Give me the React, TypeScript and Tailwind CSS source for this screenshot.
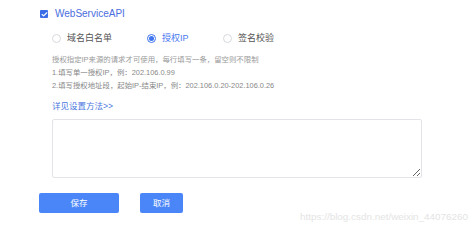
import { Check } from 'lucide-react'

const font = { fontFamily: '"Liberation Sans", "Noto Sans CJK SC", sans-serif' }

function Radio({ label, checked }: { label: string; checked?: boolean }) {
  return (
    <label className="flex items-center gap-[6px]">
      {checked ? (
        <span className="flex h-[9px] w-[9px] items-center justify-center rounded-full border-[1px] border-[#3f74f0]">
          <span className="h-[5px] w-[5px] rounded-full bg-[#3f74f0]" />
        </span>
      ) : (
        <span className="h-[9px] w-[9px] rounded-full border border-[#d6d9de] bg-white" />
      )}
      <span className={checked ? 'text-[#4a7af0]' : 'text-[#555]'}>{label}</span>
    </label>
  )
}

export default function App() {
  return (
    <div className="relative h-[228px] w-[474px] overflow-hidden bg-white" style={font}>
      {/* WebServiceAPI checkbox */}
      <div className="flex items-center gap-[7px] pl-[40px] pt-[10px] text-[10px] leading-[8px]">
        <span className="flex h-[8px] w-[8px] items-center justify-center rounded-[1px] bg-[#3c6ee8]">
          <Check className="h-[7px] w-[7px] text-white" strokeWidth={4} />
        </span>
        <span className="text-[#4a6ee0]">WebServiceAPI</span>
      </div>

      <div className="pl-[52px]">
        {/* mode radios */}
        <div className="mt-[15px] flex items-center text-[9px] leading-[10px]">
          <div className="w-[95px]">
            <Radio label="域名白名单" />
          </div>
          <div className="w-[76px]">
            <Radio label="授权IP" checked />
          </div>
          <Radio label="签名校验" />
        </div>

        {/* help text */}
        <div className="mt-[13px] flex flex-col gap-[5px] text-[7.4px] leading-[8px] text-[#9a9a9a]">
          <p>授权指定IP来源的请求才可使用，每行填写一条，留空则不限制</p>
          <p className="text-[#888]">1.填写单一授权IP，例：202.106.0.99</p>
          <p className="text-[#888]">2.填写授权地址段，起始IP-结束IP，例：202.106.0.20-202.106.0.26</p>
        </div>

        <p className="mt-[11px] text-[8.5px] leading-[10px] text-[#4a78e0]">详见设置方法&gt;&gt;</p>

        <textarea className="mt-[8px] block h-[59px] w-[370px] rounded-[2px] border border-[#e2e4e8] bg-white outline-none" />
      </div>

      {/* actions */}
      <div className="mt-[15px] flex gap-[21px] pl-[39px]">
        <button className="h-[20px] w-[80px] rounded-[2px] bg-[#4a86f7] text-[8.5px] text-white">保存</button>
        <button className="h-[20px] w-[43px] rounded-[2px] bg-[#4a86f7] text-[8.5px] text-white">取消</button>
      </div>

      <span className="absolute left-[300px] top-[211px] text-[9.9px] leading-[12px] text-[#e4e4e4]">
        https://blog.csdn.net/weixin_44076260
      </span>
    </div>
  )
}
